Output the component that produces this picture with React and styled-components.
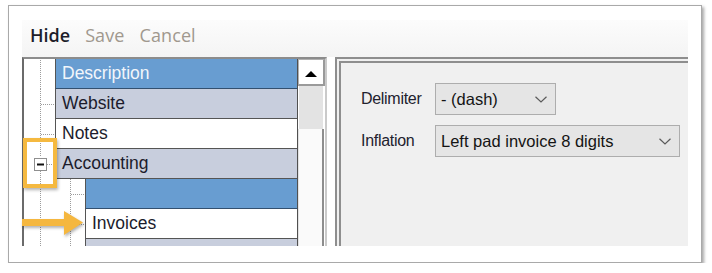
import React from "react";
import styled, { createGlobalStyle } from "styled-components";

const Global = createGlobalStyle`
  html, body { margin: 0; padding: 0; background: #ffffff; }
  body { font-family: "Liberation Sans", Arial, sans-serif; }
`;

const Frame = styled.div`
  box-sizing: border-box;
  margin: 5px 0 0 8px;
  width: 694px;
  height: 258px;
  border: 1px solid #a9a9a9;
  background: #ffffff;
  box-shadow: 2px 2px 3px rgba(0, 0, 0, 0.35);
  padding: 14px 13px 16px 13px;
`;

const Window = styled.div`
  position: relative;
  width: 666px;
  height: 226px;
  display: flex;
  flex-direction: column;
`;

const Toolbar = styled.div`
  height: 37px;
  box-sizing: border-box;
  display: flex;
  align-items: center;
  gap: 15px;
  padding: 0 0 7px 8px;
  background: linear-gradient(#fcfcfc, #f4f4f4);
  font-family: "Open Sans", sans-serif;
  font-size: 18px;
`;

const ToolButton = styled.span`
  color: ${(p) => (p.$active ? "#1d1d2a" : "#a0988e")};
  font-weight: ${(p) => (p.$active ? 600 : 400)};
  letter-spacing: ${(p) => (p.$active ? "0" : "0.1px")};
`;

const Panels = styled.div`
  flex: 1;
  display: flex;
  gap: 8px;
  min-height: 0;
  background: #ffffff;
`;

const TreePanel = styled.div`
  width: 305px;
  box-sizing: border-box;
  display: flex;
  border-left: 2px solid #6b6b6b;
  border-top: 2px solid #8c8c8c;
  border-right: 2px solid #cacaca;
  background: #ffffff;
  overflow: hidden;
`;

const TreeBody = styled.div`
  flex: 1;
  display: flex;
  flex-direction: column;
`;

const Row = styled.div`
  display: flex;
  height: 30px;
  flex-shrink: 0;
`;

const Gutter = styled.div`
  width: ${(p) => (p.$level === 2 ? 61 : 31)}px;
  flex-shrink: 0;
  display: flex;
`;

const cellColors = {
  selected: { bg: "#689dd1", fg: "#f2f6fb", bottom: "#33506f" },
  alt: { bg: "#c8cedd", fg: "#1c1c2c", bottom: "#555555" },
  plain: { bg: "#ffffff", fg: "#1c1c2c", bottom: "#555555" },
};

const Cell = styled.div`
  flex: 1;
  box-sizing: border-box;
  display: flex;
  align-items: center;
  padding-left: 6px;
  font-size: 17.5px;
  background: ${(p) => cellColors[p.$variant].bg};
  color: ${(p) => cellColors[p.$variant].fg};
  border-left: 1px solid #555555;
  border-right: 1px solid #505050;
  border-bottom: 1px solid ${(p) => cellColors[p.$variant].bottom};
  white-space: nowrap;
  overflow: hidden;
`;

const ScrollBar = styled.div`
  width: 27px;
  flex-shrink: 0;
  display: flex;
  flex-direction: column;
`;

const ScrollUp = styled.div`
  height: 27px;
  box-sizing: border-box;
  border: 1px solid #b0b0b0;
  border-right: 2px solid #9a9a9a;
  border-bottom: 2px solid #9a9a9a;
  background: #ffffff;
  display: flex;
  align-items: center;
  justify-content: center;
  padding-top: 3px;
`;

const ScrollThumb = styled.div`
  height: 43px;
  background: #e3e3e3;
  margin: 0 2px 0 1px;
`;

const ScrollTrack = styled.div`
  flex: 1;
  background: #fafafa;
  border-left: 1px solid #e2e2e2;
  border-right: 2px solid #8d8d8d;
  margin-right: 1px;
`;

const DetailPanel = styled.div`
  flex: 1;
  box-sizing: border-box;
  border-top: 6px double #8e8e8e;
  border-left: 6px double #8e8e8e;
  background: #f0f0f0;
  padding: 20px 0 0 20px;
`;

const Form = styled.div`
  display: grid;
  grid-template-columns: 74px auto;
  row-gap: 10px;
  align-items: center;
  justify-items: start;
`;

const Label = styled.span`
  font-size: 16px;
  letter-spacing: -0.3px;
  color: #22222e;
`;

const Combo = styled.div`
  box-sizing: border-box;
  width: ${(p) => p.$width}px;
  height: 32px;
  display: flex;
  align-items: center;
  justify-content: space-between;
  padding: 0 8px 0 5px;
  border: 1px solid #adadad;
  background: #e5e5e5;
  font-size: 16.5px;
  color: #141414;
`;

const Highlight = styled.div`
  position: absolute;
  left: 1px;
  top: 118px;
  width: 34px;
  height: 50px;
  box-sizing: border-box;
  border: 4px solid #f5b940;
  box-shadow: 1px 2px 3px rgba(0, 0, 0, 0.3);
`;

const ArrowMark = styled.svg`
  position: absolute;
  left: 0;
  top: 190px;
  filter: drop-shadow(1px 2px 1.5px rgba(0, 0, 0, 0.3));
`;

function Connectors({ level, expander, first }) {
  const w = level === 2 ? 61 : 31;
  const dot = { stroke: "#9c9c9c", strokeWidth: 1, strokeDasharray: "1 1" };
  return (
    <svg width={w} height="30" viewBox={`0 0 ${w} 30`}>
      {expander ? (
        <>
          <line x1="16.5" y1="0" x2="16.5" y2="8" {...dot} />
          <line x1="16.5" y1="22" x2="16.5" y2="30" {...dot} />
          <line x1="23" y1="15.5" x2="31" y2="15.5" {...dot} />
          <rect x="10.5" y="9.5" width="12" height="12" fill="#fff" stroke="#8f8f8f" />
          <line x1="13" y1="15.5" x2="20" y2="15.5" stroke="#111" strokeWidth="2" />
        </>
      ) : (
        <>
          <line x1="16.5" y1={first ? 1 : 0} x2="16.5" y2="30" {...dot} />
          {level === 1 && !first && <line x1="17" y1="15.5" x2="31" y2="15.5" {...dot} />}
          {level === 2 && (
            <>
              <line x1="46.5" y1="0" x2="46.5" y2="30" {...dot} />
              <line x1="47" y1="15.5" x2="61" y2="15.5" {...dot} />
            </>
          )}
        </>
      )}
    </svg>
  );
}

const rows = [
  { label: "Description", level: 1, variant: "selected", first: true },
  { label: "Website", level: 1, variant: "alt" },
  { label: "Notes", level: 1, variant: "plain" },
  { label: "Accounting", level: 1, variant: "alt", expander: true },
  { label: "", level: 2, variant: "selected" },
  { label: "Invoices", level: 2, variant: "plain" },
  { label: "", level: 2, variant: "alt" },
];

function Chevron() {
  return (
    <svg width="12" height="7" viewBox="0 0 12 7">
      <polyline points="0.5,0.8 6,6 11.5,0.8" fill="none" stroke="#5a5a5a" strokeWidth="1.2" />
    </svg>
  );
}

export default function App() {
  return (
    <>
      <Global />
      <Frame>
        <Window>
          <Toolbar>
            <ToolButton $active>Hide</ToolButton>
            <ToolButton>Save</ToolButton>
            <ToolButton>Cancel</ToolButton>
          </Toolbar>
          <Panels>
            <TreePanel>
              <TreeBody>
                {rows.map((r, i) => (
                  <Row key={i}>
                    <Gutter $level={r.level}>
                      <Connectors level={r.level} expander={r.expander} first={r.first} />
                    </Gutter>
                    <Cell $variant={r.variant}>{r.label}</Cell>
                  </Row>
                ))}
              </TreeBody>
              <ScrollBar>
                <ScrollUp>
                  <svg width="12" height="6" viewBox="0 0 12 6">
                    <polygon points="0,6 6,0 12,6" fill="#000" />
                  </svg>
                </ScrollUp>
                <ScrollThumb />
                <ScrollTrack />
              </ScrollBar>
            </TreePanel>
            <DetailPanel>
              <Form>
                <Label>Delimiter</Label>
                <Combo $width={121}>
                  <span>- (dash)</span>
                  <Chevron />
                </Combo>
                <Label>Inflation</Label>
                <Combo $width={245}>
                  <span>Left pad invoice 8 digits</span>
                  <Chevron />
                </Combo>
              </Form>
            </DetailPanel>
          </Panels>
          <Highlight />
          <ArrowMark width="64" height="28" viewBox="0 0 64 28">
            <rect x="0" y="9" width="46" height="7" fill="#f5b73f" />
            <polygon points="42,1 61,12.5 42,25" fill="#f5b73f" />
          </ArrowMark>
        </Window>
      </Frame>
    </>
  );
}
